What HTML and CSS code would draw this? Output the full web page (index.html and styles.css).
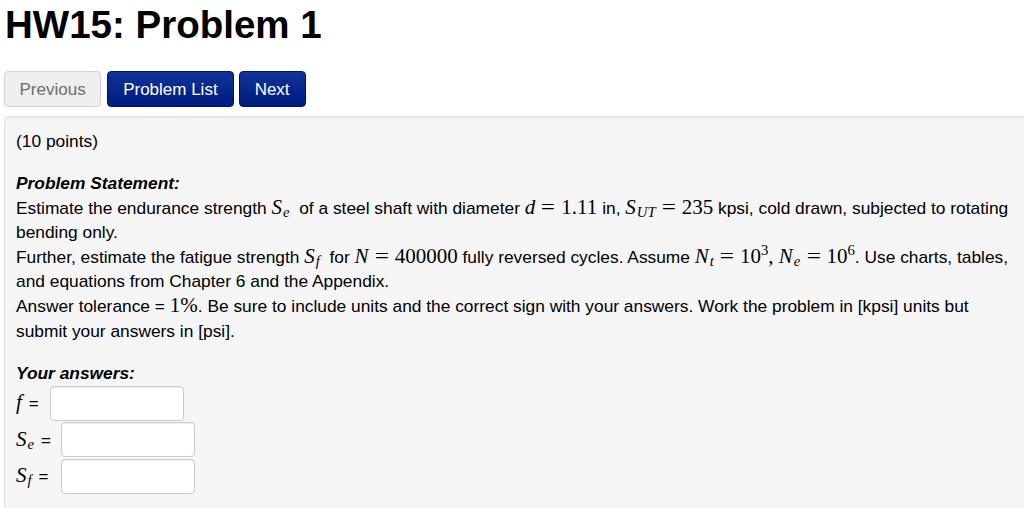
FILE: index.html
```html
<!DOCTYPE html>
<html>
<head>
<meta charset="utf-8">
<title>HW15: Problem 1</title>
<link rel="stylesheet" href="styles.css">
</head>
<body>
<div class="page">
  <h1 class="title">HW15: Problem 1</h1>
  <div class="nav">
    <button class="btn btn-disabled">Previous</button>
    <button class="btn btn-primary">Problem List</button>
    <button class="btn btn-primary">Next</button>
  </div>
  <div class="panel">
    <p class="para">(10 points)</p>
    <p class="para lines">
      <b class="heading">Problem Statement:</b><br>
      Estimate the endurance strength <span class="m"><i>S</i><sub>e</sub></span>&nbsp; of a steel shaft with diameter <span class="m"><i>d</i><span class="eq">=</span>1.11</span> in, <span class="m"><i>S</i><sub>UT</sub><span class="eq">=</span>235</span> kpsi, cold drawn, subjected to rotating<br>
      bending only.<br>
      Further, estimate the fatigue strength <span class="m"><i>S</i><sub>f</sub></span>&nbsp; for <span class="m"><i>N</i><span class="eq">=</span>400000</span> fully reversed cycles. Assume <span class="m"><i>N</i><sub>t</sub><span class="eq">=</span>10<sup>3</sup>, <i>N</i><sub>e</sub><span class="eq">=</span>10<sup>6</sup></span>. Use charts, tables,<br>
      and equations from Chapter 6 and the Appendix.<br>
      Answer tolerance = <span class="m">1%</span>. Be sure to include units and the correct sign with your answers. Work the problem in [kpsi] units but<br>
      submit your answers in [psi].
    </p>
    <p class="para"><b class="heading">Your answers:</b></p>
    <div class="answers">
      <div class="row"><label class="lbl lbl-f"><span class="m"><i>f</i></span><span class="lbl-eq">=</span></label><input class="field" type="text"></div>
      <div class="row"><label class="lbl lbl-s"><span class="m"><i>S</i><sub>e</sub></span><span class="lbl-eq">=</span></label><input class="field" type="text"></div>
      <div class="row"><label class="lbl lbl-s"><span class="m"><i>S</i><sub>f</sub></span><span class="lbl-eq">=</span></label><input class="field" type="text"></div>
    </div>
  </div>
</div>
</body>
</html>
```

FILE: styles.css
```css
html, body {
  margin: 0;
  padding: 0;
  overflow: hidden;
  background: #ffffff;
}
body {
  font-family: "Liberation Sans", Arial, sans-serif;
  color: #000;
}
.page {
  padding: 3px 0 0 4px;
}
.title {
  margin: 0 0 0 1px;
  font-size: 38.5px;
  line-height: 43px;
  font-weight: bold;
  color: #000;
}
.nav {
  display: flex;
  gap: 5px;
  margin-top: 25px;
}
.btn {
  font-family: "Liberation Sans", Arial, sans-serif;
  font-size: 17px;
  height: 36px;
  padding: 1px 15px 0;
  border-radius: 4px;
  border: 1px solid;
  margin: 0;
}
.btn-disabled {
  background: #efefef;
  border-color: #d2d2d2;
  color: #6e6e6e;
  padding: 1px 14.5px 0;
  margin-right: 1px;
}
.btn-primary {
  background: linear-gradient(#10339a, #001c7e);
  border-color: #00145e;
  color: #fff;
}
.panel {
  margin-top: 9px;
  margin-right: -12px;
  background: #f5f5f5;
  border: 1px solid #e3e3e3;
  border-radius: 4px;
  box-shadow: inset 0 1px 2px rgba(0,0,0,0.06);
  padding: 12px 11px 20px;
  font-size: 17.35px;
  line-height: 24.6px;
}
.para {
  margin: 0 0 17.4px;
}
.lines {
  white-space: nowrap;
}
.heading {
  font-weight: bold;
  font-style: italic;
}
.m {
  font-family: "Liberation Serif", "Times New Roman", serif;
  font-size: 21px;
  line-height: 1;
}
.m i {
  font-style: italic;
}
.m sub {
  font-size: 0.7em;
  font-style: italic;
  line-height: 0;
  vertical-align: -0.22em;
  margin-left: 1px;
}
.m sup {
  font-size: 0.7em;
  line-height: 0;
  vertical-align: 0.55em;
}
.eq {
  margin: 0 0.34em;
  display: inline-block;
  transform: scaleX(1.2);
}
.answers {
  display: flex;
  flex-direction: column;
  gap: 1.5px;
  margin-top: -17px;
}
.row {
  display: flex;
  align-items: center;
  height: 35px;
}
.lbl {
  font-size: 17px;
  white-space: nowrap;
  line-height: 20px;
}
.lbl-eq {
  margin-left: 7px;
}
.lbl-f {
  width: 34px;
  margin-left: -3px;
  padding-left: 3px;
}
.lbl-s {
  width: 45px;
}
.field {
  box-sizing: border-box;
  width: 134px;
  height: 35px;
  margin: 0;
  background: #fff;
  border: 1px solid #cccccc;
  border-radius: 4px;
  box-shadow: inset 0 1px 1px rgba(0,0,0,0.075);
}
```
